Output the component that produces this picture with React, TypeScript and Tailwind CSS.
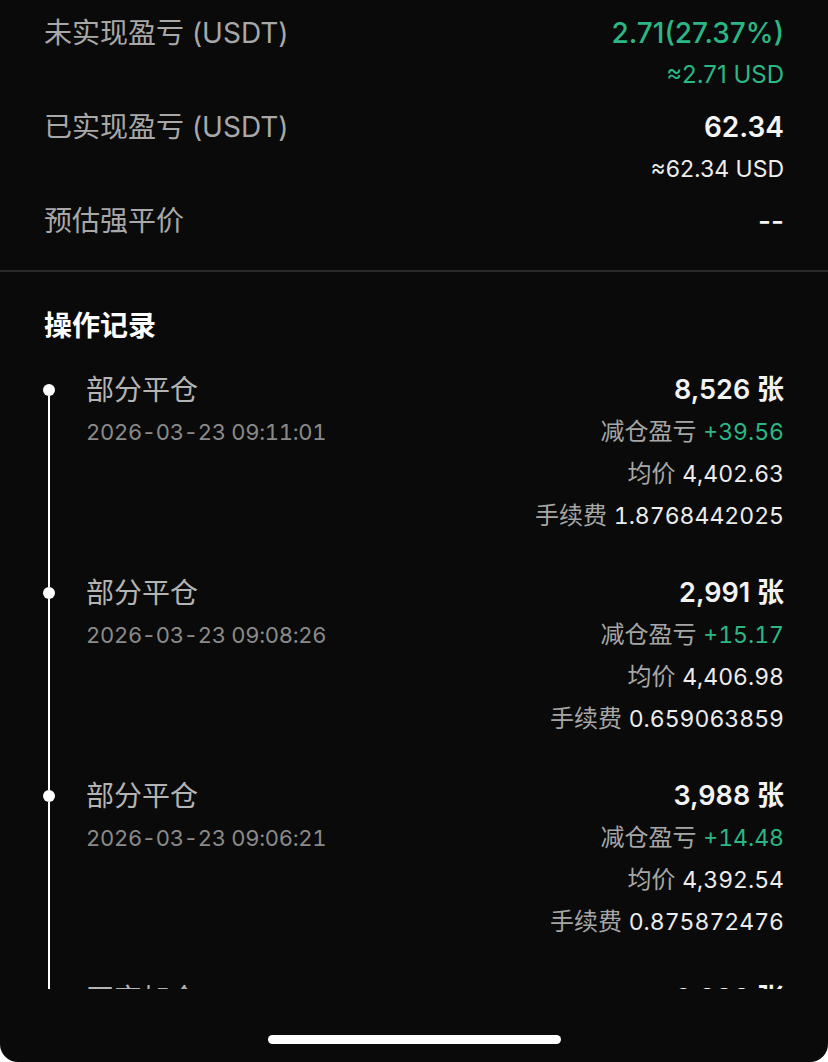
import React from "react";

interface RecordItem {
  title: string;
  time: string;
  amount: string;
  pnl: string;
  price: string;
  fee: string;
}

const records: RecordItem[] = [
  {
    title: "部分平仓",
    time: "2026-03-23 09:11:01",
    amount: "8,526",
    pnl: "+39.56",
    price: "4,402.63",
    fee: "1.8768442025",
  },
  {
    title: "部分平仓",
    time: "2026-03-23 09:08:26",
    amount: "2,991",
    pnl: "+15.17",
    price: "4,406.98",
    fee: "0.659063859",
  },
  {
    title: "部分平仓",
    time: "2026-03-23 09:06:21",
    amount: "3,988",
    pnl: "+14.48",
    price: "4,392.54",
    fee: "0.875872476",
  },
  {
    title: "开空加仓",
    time: "2026-03-23 09:01:12",
    amount: "6,393",
    pnl: "+0.00",
    price: "4,398.10",
    fee: "1.405837620",
  },
];

const font = "font-['Inter','Noto_Sans_CJK_SC',sans-serif]";

const Record: React.FC<{ item: RecordItem; first: boolean }> = ({ item, first }) => {
  return (
    <div className="flex pl-[43px] pr-[44px]">
      <div className="flex w-3 shrink-0 flex-col items-center">
        <div className={first ? "h-[15px] w-[2px] bg-transparent" : "h-[15px] w-[2px] bg-white"} />
        <div className="h-3 w-3 rounded-full bg-white" />
        <div className="w-[2px] flex-1 bg-white" />
      </div>
      <div className="ml-[31px] flex flex-1 justify-between pb-[35px]">
        <div>
          <div className="flex h-[42px] items-center text-[28px] text-[#b4b4b4]">{item.title}</div>
          <div className="flex h-[42px] items-center text-[22px] tracking-[-0.3px] tabular-nums text-[#8a8a8a]">
            {item.time}
          </div>
        </div>
        <div className="flex flex-col items-end">
          <div className="flex h-[42px] items-center text-[27px] font-semibold text-[#f2f2f2]">
            {item.amount}&nbsp;张
          </div>
          <div className="flex h-[42px] items-center text-[24px] text-[#a6a6a6]">
            减仓盈亏&nbsp;<span className="text-[23px] tabular-nums text-[#2bb784]">{item.pnl}</span>
          </div>
          <div className="flex h-[42px] items-center text-[24px] text-[#a6a6a6]">
            均价&nbsp;<span className="text-[23px] tabular-nums text-[#ededed]">{item.price}</span>
          </div>
          <div className="flex h-[42px] items-center text-[24px] text-[#a6a6a6]">
            手续费&nbsp;<span className="text-[23px] tabular-nums text-[#ededed]">{item.fee}</span>
          </div>
        </div>
      </div>
    </div>
  );
};

export default function App() {
  return (
    <div className={`h-[1062px] w-[828px] bg-white ${font}`}>
      <div className="flex h-full flex-col rounded-b-[18px] bg-[#0a0a0a]">
        <div className="h-[989px] overflow-hidden">
          <div className="flex flex-col gap-[10px] px-[44px] pt-[12px] pb-[28px]">
            <div>
              <div className="flex h-[42px] items-center justify-between">
                <span className="text-[28px] text-[#a8a8a8]">未实现盈亏 (USDT)</span>
                <span className="text-[28px] font-medium text-[#2bb784]">2.71(27.37%)</span>
              </div>
              <div className="flex h-[42px] items-center justify-end text-[24px] text-[#2bb784]">
                ≈2.71 USD
              </div>
            </div>
            <div>
              <div className="flex h-[42px] items-center justify-between">
                <span className="text-[28px] text-[#a8a8a8]">已实现盈亏 (USDT)</span>
                <span className="text-[28px] font-semibold text-[#f5f5f5]">62.34</span>
              </div>
              <div className="flex h-[42px] items-center justify-end text-[23px] text-[#ededed]">
                ≈62.34 USD
              </div>
            </div>
            <div className="flex h-[42px] items-center justify-between">
              <span className="text-[28px] text-[#a8a8a8]">预估强平价</span>
              <span className="text-[28px] font-medium text-[#f5f5f5]">--</span>
            </div>
          </div>
          <div className="h-[2px] bg-[#2a2a2a]" />
          <div className="mt-[34px] flex h-[40px] items-center px-[44px] text-[28px] font-semibold text-white">
            操作记录
          </div>
          <div className="mt-[23px]">
            {records.map((r, i) => (
              <Record key={i} item={r} first={i === 0} />
            ))}
          </div>
        </div>
        <div className="flex flex-1 justify-center pt-[46px]">
          <div className="h-[9px] w-[293px] rounded-full bg-white" />
        </div>
      </div>
    </div>
  );
}
